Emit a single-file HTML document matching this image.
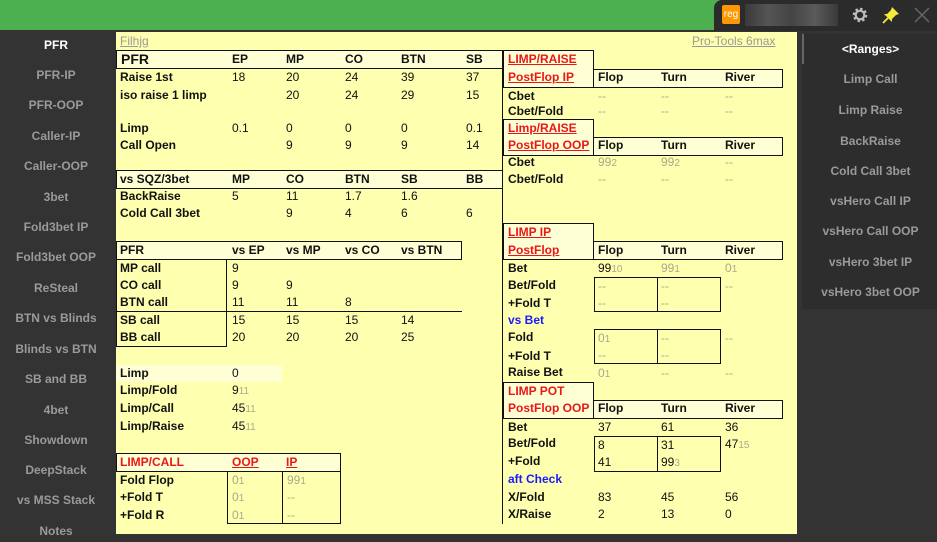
<!DOCTYPE html>
<html><head><meta charset="utf-8"><style>
*{margin:0;padding:0;box-sizing:border-box}
body{width:937px;height:542px;background:#333;position:relative;overflow:hidden;font-family:"Liberation Sans",sans-serif}
.t{position:absolute;font-weight:bold;font-size:12px;line-height:14px;white-space:nowrap;color:#111}
.n{font-weight:normal}
.g{font-weight:normal;color:#aaa98a}
.r{color:#e8171a;text-decoration:underline}
.rn{color:#e8171a}
.b{color:#1a1aff}
.s{font-size:10px;color:#aaa98a;font-weight:normal}
.box{position:absolute;border:1px solid #111}
.hb{position:absolute;border:1px solid #111;background:#ffffd6}
.ln{position:absolute;background:#111}
.side{position:absolute;font-weight:bold;font-size:12px;color:#9a9a9a;text-align:center;line-height:14px}
</style></head><body>
<div style="position:absolute;left:0;top:0;width:937px;height:30px;background:#4caf50"></div>
<div style="position:absolute;left:714px;top:0;width:223px;height:31px;background:#2b2b2b;border-top-left-radius:8px"></div>
<div style="position:absolute;left:722px;top:5px;width:18px;height:19px;background:#ff9800;border-radius:2px;color:#fff;font-size:10px;line-height:19px;text-align:center">reg</div>
<div style="position:absolute;left:745px;top:4px;width:93px;height:22px;background:linear-gradient(90deg,#3a3a3a,#555,#444,#5a5a5a,#3a3a3a)"></div>
<svg style="position:absolute;left:851px;top:6px" width="18" height="18" viewBox="0 0 18 18"><circle cx="9" cy="9" r="5.5" fill="none" stroke="#bbb" stroke-width="3.5" stroke-dasharray="2.2 2.1"/><circle cx="9" cy="9" r="4.3" fill="none" stroke="#bbb" stroke-width="2.2"/></svg>
<svg style="position:absolute;left:881px;top:5px" width="20" height="20" viewBox="0 0 20 20"><path d="M11 2 L18 9 L15 10 L11 14 L11 17 L3 9 L6 9 L10 5 Z" fill="#f5e93a"/><path d="M7 13 L2 18" stroke="#f5e93a" stroke-width="1.8"/></svg>
<svg style="position:absolute;left:914px;top:7px" width="16" height="16"><path d="M1 1L15 15M15 1L1 15" stroke="#666" stroke-width="1.5"/></svg>

<div style="position:absolute;left:116px;top:32px;width:681px;height:502px;background:#ffffb0"></div>
<div style="position:absolute;left:802px;top:34px;width:135px;height:275px;background:#2d2d2d"></div>
<div style="position:absolute;left:802px;top:34px;width:2px;height:30px;background:#666"></div>

<!-- left sidebar -->
<div class="side" style="left:0;width:112px;top:38px;color:#fff">PFR</div>
<div class="side" style="left:0;width:112px;top:68px">PFR-IP</div>
<div class="side" style="left:0;width:112px;top:98px">PFR-OOP</div>
<div class="side" style="left:0;width:112px;top:129px">Caller-IP</div>
<div class="side" style="left:0;width:112px;top:159px">Caller-OOP</div>
<div class="side" style="left:0;width:112px;top:190px">3bet</div>
<div class="side" style="left:0;width:112px;top:220px">Fold3bet IP</div>
<div class="side" style="left:0;width:112px;top:250px">Fold3bet OOP</div>
<div class="side" style="left:0;width:112px;top:281px">ReSteal</div>
<div class="side" style="left:0;width:112px;top:311px">BTN vs Blinds</div>
<div class="side" style="left:0;width:112px;top:342px">Blinds vs BTN</div>
<div class="side" style="left:0;width:112px;top:372px">SB and BB</div>
<div class="side" style="left:0;width:112px;top:403px">4bet</div>
<div class="side" style="left:0;width:112px;top:433px">Showdown</div>
<div class="side" style="left:0;width:112px;top:463px">DeepStack</div>
<div class="side" style="left:0;width:112px;top:493px">vs MSS Stack</div>
<div class="side" style="left:0;width:112px;top:524px">Notes</div>

<!-- right sidebar -->
<div class="side" style="left:804px;width:133px;top:42px;color:#fff">&lt;Ranges&gt;</div>
<div class="side" style="left:804px;width:133px;top:72px">Limp Call</div>
<div class="side" style="left:804px;width:133px;top:103px">Limp Raise</div>
<div class="side" style="left:804px;width:133px;top:134px">BackRaise</div>
<div class="side" style="left:804px;width:133px;top:164px">Cold Call 3bet</div>
<div class="side" style="left:804px;width:133px;top:194px">vsHero Call IP</div>
<div class="side" style="left:804px;width:133px;top:224px">vsHero Call OOP</div>
<div class="side" style="left:804px;width:133px;top:255px">vsHero 3bet IP</div>
<div class="side" style="left:804px;width:133px;top:285px">vsHero 3bet OOP</div>

<div class="t n" style="left:120px;top:34px;color:#999;text-decoration:underline">Filhjg</div>
<div class="t n" style="left:692px;top:34px;color:#999;text-decoration:underline">Pro-Tools 6max</div>

<!-- PFR table -->
<div class="hb" style="left:116px;top:50px;width:387px;height:19px"></div>
<div class="ln" style="left:502px;top:50px;width:1px;height:474px"></div>
<div class="t" style="left:121px;top:51px;font-size:14px;line-height:16px">PFR</div>
<div class="t" style="left:232px;top:52px">EP</div><div class="t" style="left:286px;top:52px">MP</div><div class="t" style="left:345px;top:52px">CO</div><div class="t" style="left:401px;top:52px">BTN</div><div class="t" style="left:466px;top:52px">SB</div>
<div class="t" style="left:120px;top:70px">Raise 1st</div><div class="t n" style="left:232px;top:70px">18</div><div class="t n" style="left:286px;top:70px">20</div><div class="t n" style="left:345px;top:70px">24</div><div class="t n" style="left:401px;top:70px">39</div><div class="t n" style="left:466px;top:70px">37</div>
<div class="t" style="left:120px;top:88px">iso raise 1 limp</div><div class="t n" style="left:286px;top:88px">20</div><div class="t n" style="left:345px;top:88px">24</div><div class="t n" style="left:401px;top:88px">29</div><div class="t n" style="left:466px;top:88px">15</div>
<div class="t" style="left:120px;top:121px">Limp</div><div class="t n" style="left:232px;top:121px">0.1</div><div class="t n" style="left:286px;top:121px">0</div><div class="t n" style="left:345px;top:121px">0</div><div class="t n" style="left:401px;top:121px">0</div><div class="t n" style="left:466px;top:121px">0.1</div>
<div class="t" style="left:120px;top:138px">Call Open</div><div class="t n" style="left:286px;top:138px">9</div><div class="t n" style="left:345px;top:138px">9</div><div class="t n" style="left:401px;top:138px">9</div><div class="t n" style="left:466px;top:138px">14</div>

<div class="hb" style="left:116px;top:170px;width:387px;height:19px"></div>
<div class="t" style="left:120px;top:172px">vs SQZ/3bet</div><div class="t" style="left:232px;top:172px">MP</div><div class="t" style="left:286px;top:172px">CO</div><div class="t" style="left:345px;top:172px">BTN</div><div class="t" style="left:401px;top:172px">SB</div><div class="t" style="left:466px;top:172px">BB</div>
<div class="t" style="left:120px;top:189px">BackRaise</div><div class="t n" style="left:232px;top:189px">5</div><div class="t n" style="left:286px;top:189px">11</div><div class="t n" style="left:345px;top:189px">1.7</div><div class="t n" style="left:401px;top:189px">1.6</div>
<div class="t" style="left:120px;top:206px">Cold Call 3bet</div><div class="t n" style="left:286px;top:206px">9</div><div class="t n" style="left:345px;top:206px">4</div><div class="t n" style="left:401px;top:206px">6</div><div class="t n" style="left:466px;top:206px">6</div>

<!-- PFR vs -->
<div class="hb" style="left:116px;top:241px;width:346px;height:19px"></div>
<div class="t" style="left:120px;top:243px">PFR</div><div class="t" style="left:232px;top:243px">vs EP</div><div class="t" style="left:286px;top:243px">vs MP</div><div class="t" style="left:345px;top:243px">vs CO</div><div class="t" style="left:401px;top:243px">vs BTN</div>
<div class="ln" style="left:226px;top:259px;width:1px;height:88px"></div>
<div class="ln" style="left:116px;top:311px;width:346px;height:1px"></div>
<div class="ln" style="left:116px;top:346px;width:111px;height:1px"></div>
<div class="ln" style="left:116px;top:259px;width:1px;height:88px"></div>
<div class="t" style="left:120px;top:261px">MP call</div><div class="t n" style="left:232px;top:261px">9</div>
<div class="t" style="left:120px;top:278px">CO call</div><div class="t n" style="left:232px;top:278px">9</div><div class="t n" style="left:286px;top:278px">9</div>
<div class="t" style="left:120px;top:295px">BTN call</div><div class="t n" style="left:232px;top:295px">11</div><div class="t n" style="left:286px;top:295px">11</div><div class="t n" style="left:345px;top:295px">8</div>
<div class="t" style="left:120px;top:313px">SB call</div><div class="t n" style="left:232px;top:313px">15</div><div class="t n" style="left:286px;top:313px">15</div><div class="t n" style="left:345px;top:313px">15</div><div class="t n" style="left:401px;top:313px">14</div>
<div class="t" style="left:120px;top:330px">BB call</div><div class="t n" style="left:232px;top:330px">20</div><div class="t n" style="left:286px;top:330px">20</div><div class="t n" style="left:345px;top:330px">20</div><div class="t n" style="left:401px;top:330px">25</div>

<div style="position:absolute;left:116px;top:365px;width:166px;height:17px;background:#ffffd6"></div>
<div class="t" style="left:120px;top:366px">Limp</div><div class="t n" style="left:232px;top:366px">0</div>
<div class="t" style="left:120px;top:383px">Limp/Fold</div><div class="t n" style="left:232px;top:383px">9<span class="s">11</span></div>
<div class="t" style="left:120px;top:401px">Limp/Call</div><div class="t n" style="left:232px;top:401px">45<span class="s">11</span></div>
<div class="t" style="left:120px;top:419px">Limp/Raise</div><div class="t n" style="left:232px;top:419px">45<span class="s">11</span></div>

<div class="hb" style="left:116px;top:453px;width:225px;height:19px"></div>
<div class="t rn" style="left:120px;top:455px">LIMP/CALL</div><div class="t r" style="left:232px;top:455px">OOP</div><div class="t r" style="left:286px;top:455px">IP</div>
<div class="box" style="left:227px;top:471px;width:56px;height:53px"></div>
<div class="box" style="left:282px;top:471px;width:59px;height:53px"></div>
<div class="t" style="left:120px;top:473px">Fold Flop</div><div class="t g" style="left:232px;top:473px">0<span class="s">1</span></div><div class="t g" style="left:287px;top:473px">99<span class="s">1</span></div>
<div class="t" style="left:120px;top:490px">+Fold T</div><div class="t g" style="left:232px;top:490px">0<span class="s">1</span></div><div class="t g" style="left:287px;top:490px">--</div>
<div class="t" style="left:120px;top:508px">+Fold R</div><div class="t g" style="left:232px;top:508px">0<span class="s">1</span></div><div class="t g" style="left:287px;top:508px">--</div>

<!-- right: LIMP/RAISE IP -->
<div class="hb" style="left:503px;top:50px;width:91px;height:38px"></div>
<div class="hb" style="left:593px;top:69px;width:190px;height:19px"></div>
<div class="t r" style="left:508px;top:52px">LIMP/RAISE</div>
<div class="t r" style="left:508px;top:70px">PostFlop IP</div>
<div class="t" style="left:598px;top:70px">Flop</div><div class="t" style="left:661px;top:70px">Turn</div><div class="t" style="left:725px;top:70px">River</div>
<div class="t" style="left:508px;top:89px">Cbet</div><div class="t g" style="left:598px;top:89px">--</div><div class="t g" style="left:661px;top:89px">--</div><div class="t g" style="left:725px;top:89px">--</div>
<div class="t" style="left:508px;top:104px">Cbet/Fold</div><div class="t g" style="left:598px;top:104px">--</div><div class="t g" style="left:661px;top:104px">--</div><div class="t g" style="left:725px;top:104px">--</div>

<div class="hb" style="left:503px;top:119px;width:91px;height:37px"></div>
<div class="hb" style="left:593px;top:137px;width:190px;height:19px"></div>
<div class="t r" style="left:508px;top:121px">Limp/RAISE</div>
<div class="t r" style="left:508px;top:138px">PostFlop OOP</div>
<div class="t" style="left:598px;top:138px">Flop</div><div class="t" style="left:661px;top:138px">Turn</div><div class="t" style="left:725px;top:138px">River</div>
<div class="t" style="left:508px;top:155px">Cbet</div><div class="t g" style="left:598px;top:155px">99<span class="s">2</span></div><div class="t g" style="left:661px;top:155px">99<span class="s">2</span></div><div class="t g" style="left:725px;top:155px">--</div>
<div class="t" style="left:508px;top:172px">Cbet/Fold</div><div class="t g" style="left:598px;top:172px">--</div><div class="t g" style="left:661px;top:172px">--</div><div class="t g" style="left:725px;top:172px">--</div>

<!-- LIMP IP -->
<div class="hb" style="left:503px;top:223px;width:91px;height:37px"></div>
<div class="hb" style="left:593px;top:241px;width:190px;height:19px"></div>
<div class="t r" style="left:508px;top:225px">LIMP IP</div>
<div class="t r" style="left:508px;top:243px">PostFlop</div>
<div class="t" style="left:598px;top:243px">Flop</div><div class="t" style="left:661px;top:243px">Turn</div><div class="t" style="left:725px;top:243px">River</div>
<div class="t" style="left:508px;top:261px">Bet</div><div class="t n" style="left:598px;top:261px">99<span class="s">10</span></div><div class="t g" style="left:661px;top:261px">99<span class="s">1</span></div><div class="t g" style="left:725px;top:261px">0<span class="s">1</span></div>
<div class="box" style="left:594px;top:277px;width:64px;height:35px"></div><div class="box" style="left:657px;top:277px;width:64px;height:35px"></div>
<div class="t" style="left:508px;top:278px">Bet/Fold</div><div class="t g" style="left:598px;top:279px">--</div><div class="t g" style="left:661px;top:279px">--</div><div class="t g" style="left:725px;top:279px">--</div>
<div class="t" style="left:508px;top:296px">+Fold T</div><div class="t g" style="left:598px;top:296px">--</div><div class="t g" style="left:661px;top:296px">--</div>
<div class="t b" style="left:508px;top:313px">vs Bet</div>
<div class="box" style="left:594px;top:329px;width:64px;height:35px"></div><div class="box" style="left:657px;top:329px;width:64px;height:35px"></div>
<div class="t" style="left:508px;top:330px">Fold</div><div class="t g" style="left:598px;top:331px">0<span class="s">1</span></div><div class="t g" style="left:661px;top:331px">--</div><div class="t g" style="left:725px;top:331px">--</div>
<div class="t" style="left:508px;top:349px">+Fold T</div><div class="t g" style="left:598px;top:348px">--</div><div class="t g" style="left:661px;top:348px">--</div>
<div class="t" style="left:508px;top:365px">Raise Bet</div><div class="t g" style="left:598px;top:366px">0<span class="s">1</span></div><div class="t g" style="left:661px;top:366px">--</div><div class="t g" style="left:725px;top:366px">--</div>

<!-- LIMP POT -->
<div class="hb" style="left:503px;top:382px;width:91px;height:37px"></div>
<div class="hb" style="left:593px;top:400px;width:190px;height:19px"></div>
<div class="t rn" style="left:508px;top:384px">LIMP POT</div>
<div class="t rn" style="left:508px;top:401px">PostFlop OOP</div>
<div class="t" style="left:598px;top:401px">Flop</div><div class="t" style="left:661px;top:401px">Turn</div><div class="t" style="left:725px;top:401px">River</div>
<div class="t" style="left:508px;top:420px">Bet</div><div class="t n" style="left:598px;top:420px">37</div><div class="t n" style="left:661px;top:420px">61</div><div class="t n" style="left:725px;top:420px">36</div>
<div class="box" style="left:594px;top:436px;width:64px;height:36px"></div><div class="box" style="left:657px;top:436px;width:64px;height:36px"></div>
<div class="t" style="left:508px;top:436px">Bet/Fold</div><div class="t n" style="left:598px;top:438px">8</div><div class="t n" style="left:661px;top:438px">31</div><div class="t n" style="left:725px;top:437px">47<span class="s">15</span></div>
<div class="t" style="left:508px;top:454px">+Fold</div><div class="t n" style="left:598px;top:455px">41</div><div class="t n" style="left:661px;top:455px">99<span class="s">3</span></div>
<div class="t b" style="left:508px;top:472px">aft Check</div>
<div class="t" style="left:508px;top:490px">X/Fold</div><div class="t n" style="left:598px;top:490px">83</div><div class="t n" style="left:661px;top:490px">45</div><div class="t n" style="left:725px;top:490px">56</div>
<div class="t" style="left:508px;top:507px">X/Raise</div><div class="t n" style="left:598px;top:507px">2</div><div class="t n" style="left:661px;top:507px">13</div><div class="t n" style="left:725px;top:507px">0</div>
</body></html>
